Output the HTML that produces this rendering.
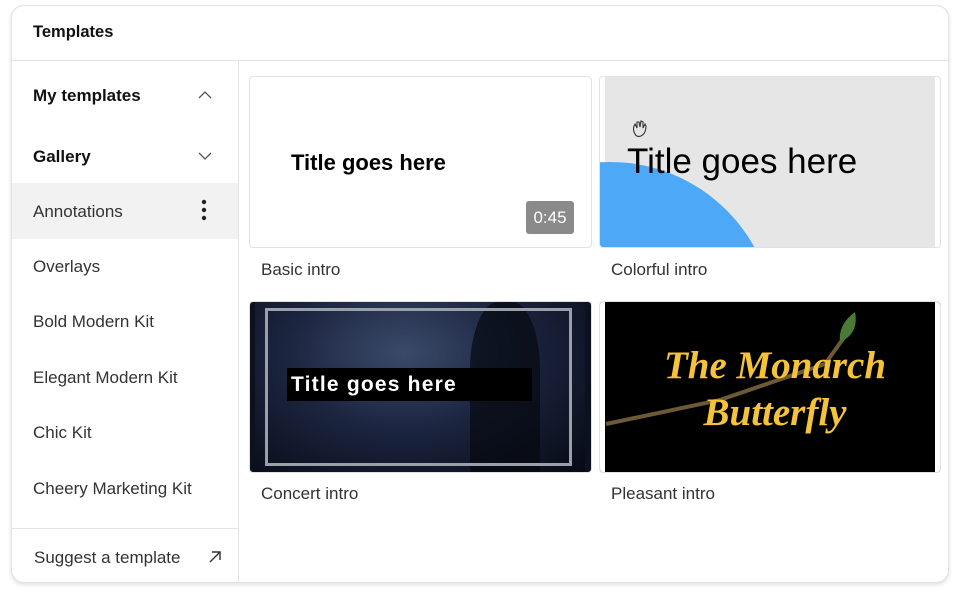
<!DOCTYPE html>
<html><head><meta charset="utf-8"><style>
*{margin:0;padding:0;box-sizing:border-box}
body{width:960px;height:600px;background:#fff;font-family:"Liberation Sans",sans-serif;color:#1a1a1a;position:relative;overflow:hidden}
.card{position:absolute;left:11px;top:5px;width:938px;height:578px;border:1px solid #e2e2e2;border-radius:13px;box-shadow:0 2px 4px rgba(0,0,0,.12);background:#fff;overflow:hidden}
.a{position:absolute}
.t{font-size:17px;color:#333;white-space:nowrap}
.b{font-weight:bold;color:#111;font-size:16px}
.thumb{position:absolute;border:1px solid #e2e2e2;border-radius:4px;overflow:hidden;background:#fff}
</style></head><body>
<div class="card">
 <div class="a b" style="left:21px;top:17px;font-size:16.5px">Templates</div>
 <div class="a" style="left:0;top:54px;width:938px;height:1px;background:#e4e4e4"></div>
 <div class="a" style="left:226px;top:55px;width:1px;height:523px;background:#e4e4e4"></div>
 <div class="a b" style="left:21px;top:80px;font-size:17px">My templates</div>
 <svg class="a" style="left:186px;top:84px" width="14" height="10"><path d="M1 8 L7 2 L13 8" fill="none" stroke="#555" stroke-width="1.3"/></svg>
 <div class="a b" style="left:21px;top:141px;font-size:17px">Gallery</div>
 <svg class="a" style="left:186px;top:145px" width="14" height="10"><path d="M1 2 L7 8 L13 2" fill="none" stroke="#555" stroke-width="1.3"/></svg>
 <div class="a" style="left:0;top:177px;width:226px;height:56px;background:#f2f2f2"></div>
 <div class="a t" style="left:21px;top:196px">Annotations</div>
 <svg class="a" style="left:189px;top:193px" width="6" height="24"><circle cx="3" cy="3" r="2.2" fill="#222"/><circle cx="3" cy="11" r="2.2" fill="#222"/><circle cx="3" cy="19" r="2.2" fill="#222"/></svg>
 <div class="a t" style="left:21px;top:251px">Overlays</div>
 <div class="a t" style="left:21px;top:306px">Bold Modern Kit</div>
 <div class="a t" style="left:21px;top:362px">Elegant Modern Kit</div>
 <div class="a t" style="left:21px;top:417px">Chic Kit</div>
 <div class="a t" style="left:21px;top:473px">Cheery Marketing Kit</div>
 <div class="a" style="left:0;top:522px;width:226px;height:1px;background:#e4e4e4"></div>
 <div class="a t" style="left:22px;top:542px">Suggest a template</div>
 <svg class="a" style="left:196px;top:544px" width="14" height="14"><path d="M2 12 L12 2 M4 2 H12 V10" fill="none" stroke="#333" stroke-width="1.4"/></svg>

 <div class="thumb" style="left:237px;top:70px;width:343px;height:172px">
  <div class="a" style="left:41px;top:73px;font-size:22px;font-weight:bold;color:#000">Title goes here</div>
  <div class="a" style="left:276px;top:124px;width:48px;height:33px;background:#8a8a8a;border-radius:3px;color:#fff;font-size:17px;text-align:center;line-height:33px">0:45</div>
 </div>
 <div class="a t" style="left:249px;top:254px">Basic intro</div>

 <div class="thumb" style="left:587px;top:70px;width:342px;height:172px;background:#e6e6e6">
  <div class="a" style="left:0;top:0;width:5px;height:172px;background:#fff"></div>
  <div class="a" style="right:0;top:0;width:5px;height:172px;background:#fff"></div>
  <div class="a" style="left:-155px;top:85px;width:330px;height:330px;border-radius:50%;background:#4da8f7"></div>
  <div class="a" style="left:27px;top:65px;font-size:35px;color:#000">Title goes here</div>
  <svg class="a" style="left:30px;top:42px" width="20" height="20"><path d="M5 15 C3 12 3 8 5 5 L7 9 L7 3 L9 3 L10 8 L11 2 L13 3 L13 9 L15 5 L16 7 C16 11 15 15 11 17 C8 18 6 17 5 15Z" fill="none" stroke="#333" stroke-width="1.1"/></svg>
 </div>
 <div class="a t" style="left:599px;top:254px">Colorful intro</div>

 <div class="thumb" style="left:237px;top:295px;width:343px;height:172px;background:#0c1120">
  <div class="a" style="left:5px;top:0;width:330px;height:170px;background:radial-gradient(ellipse at 45% 30%,#3a4a6a 0%,#1c2540 45%,#070a14 100%)"></div>
  <div class="a" style="left:220px;top:0;width:70px;height:170px;background:rgba(5,8,15,.7);border-radius:40% 40% 0 0"></div>
  <div class="a" style="left:15px;top:6px;width:307px;height:158px;border:3px solid #9aa0aa"></div>
  <div class="a" style="left:37px;top:66px;width:245px;height:33px;background:#000;color:#fff;font-size:21px;font-weight:bold;line-height:33px;padding-left:4px;letter-spacing:1.2px">Title goes here</div>
 </div>
 <div class="a t" style="left:249px;top:478px">Concert intro</div>

 <div class="thumb" style="left:587px;top:295px;width:342px;height:172px;background:#000">
  <div class="a" style="left:0;top:0;width:5px;height:172px;background:#fff"></div>
  <div class="a" style="right:0;top:0;width:5px;height:172px;background:#fff"></div>
  <svg class="a" style="left:0;top:0" width="342" height="172"><path d="M6 122 L120 98 L225 62 L248 30" stroke="#6b5a35" stroke-width="4" fill="none"/><path d="M240 40 C238 25 248 15 255 10 C258 25 252 35 240 40Z" fill="#4a7a35"/></svg>
  <div class="a" style="left:40px;top:40px;width:270px;text-align:center;font-family:'Liberation Serif',serif;font-style:italic;font-weight:bold;font-size:39px;line-height:47px;color:#f5c33a">The Monarch<br>Butterfly</div>
 </div>
 <div class="a t" style="left:599px;top:478px">Pleasant intro</div>
</div>
</body></html>
